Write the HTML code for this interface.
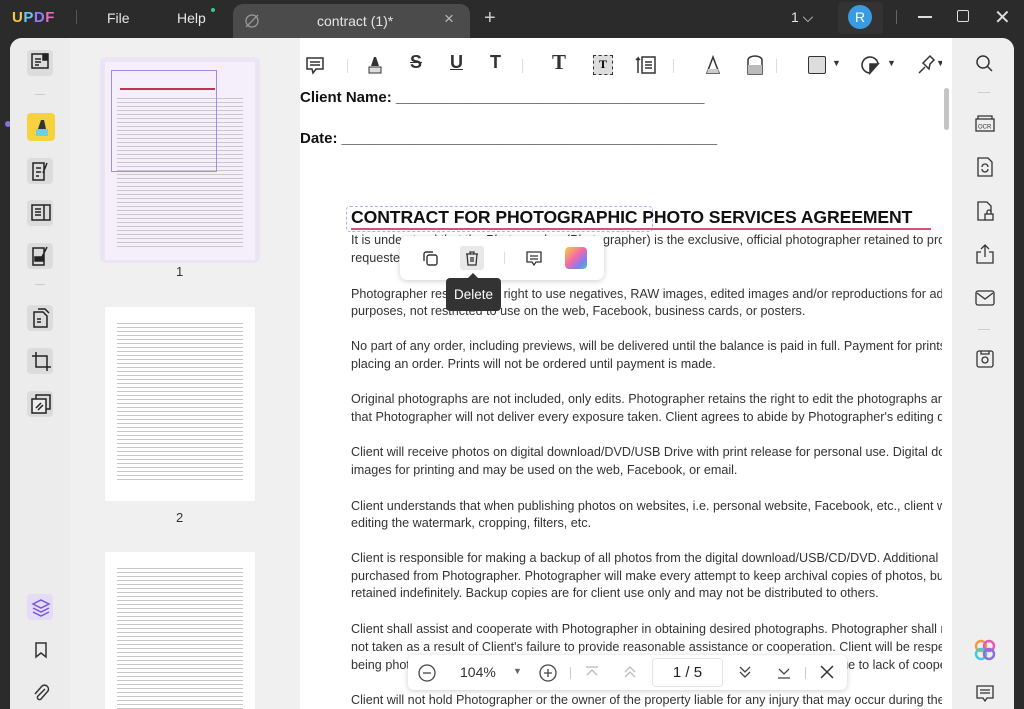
<!DOCTYPE html>
<html><head><meta charset="utf-8"><style>
*{margin:0;padding:0;box-sizing:border-box}
body{width:1024px;height:709px;overflow:hidden;background:#2b2b2b;font-family:"Liberation Sans",sans-serif;position:relative}
.abs{position:absolute}
.top{color:#e6e6e6;font-size:14px}
.main{left:10px;top:38px;width:1004px;height:671px;background:#efefef;border-radius:12px 12px 0 0;overflow:hidden}
.rail{left:0;top:0;width:60px;height:671px;background:#ececec}
.ico{position:absolute;width:26px;height:26px;border-radius:4px;background:#dcdcdc}
.doc{left:290px;top:0;width:642px;height:671px;background:#fff;overflow:hidden}
.p{position:absolute;left:51px;font-size:12.6px;color:#333;white-space:nowrap;line-height:17.5px}
.tb{position:absolute;top:14px;font-size:18px;color:#333;font-weight:bold}
.thumb{position:absolute;left:95px;width:150px;background:#fff}
.txt{position:absolute;left:12px;right:12px;background:repeating-linear-gradient(to bottom,#c8c8c8 0,#c8c8c8 1px,transparent 1px,transparent 4px)}
svg{position:absolute}
</style></head><body>
<div class="abs" style="left:12px;top:9px;font-weight:bold;font-size:15px;letter-spacing:0.5px"><span style="color:#f6c544">U</span><span style="color:#6ec3f1">P</span><span style="color:#8e7ef5">D</span><span style="color:#e86ab6">F</span></div>
<div class="abs" style="left:76px;top:10px;width:1px;height:14px;background:#555"></div>
<div class="abs top" style="left:107px;top:10px">File</div>
<div class="abs top" style="left:177px;top:10px">Help</div>
<div class="abs" style="left:211px;top:8px;width:4px;height:4px;border-radius:50%;background:#3ec78a"></div>
<div class="abs" style="left:233px;top:4px;width:237px;height:40px;background:#4b4b4b;border-radius:10px 10px 0 0"></div>
<svg style="left:244px;top:13px" width="16" height="16" viewBox="0 0 16 16" fill="none" stroke="#999" stroke-width="1.3"><circle cx="8" cy="8" r="6"/><path d="M2 14L14 2"/></svg>
<div class="abs top" style="left:317px;top:13px;font-size:14px">contract (1)*</div>
<div class="abs" style="left:444px;top:9px;color:#bbb;font-size:17px">×</div>
<div class="abs" style="left:484px;top:7px;color:#ccc;font-size:20px">+</div>
<div class="abs top" style="left:791px;top:9px">1 ⌵</div>
<div class="abs" style="left:838px;top:2px;width:45px;height:32px;background:#333;border-radius:4px"></div>
<div class="abs" style="left:848px;top:5px;width:24px;height:24px;border-radius:50%;background:#3b9be0;color:#fff;font-size:14px;text-align:center;line-height:24px">R</div>
<div class="abs" style="left:896px;top:10px;width:1px;height:14px;background:#666"></div>
<div class="abs" style="left:918px;top:16px;width:14px;height:1.5px;background:#ddd"></div>
<div class="abs" style="left:957px;top:10px;width:12px;height:12px;border:1.5px solid #ddd;border-radius:2px"></div>
<div class="abs" style="left:994px;top:5px;color:#ddd;font-size:20px">✕</div>
<div class="abs" style="left:5px;top:121px;width:6px;height:6px;border-radius:50%;background:#8c6de0"></div>

<div class="abs main">
 <div class="abs rail">
  <div class="ico" style="left:17px;top:12px"></div>
  <svg style="left:20px;top:14px" width="20" height="20" fill="none" stroke="#222" stroke-width="1.5"><rect x="2" y="2" width="16" height="14"/><path d="M5 7h6M5 10h6M5 13h4"/><rect x="13" y="2" width="4" height="6" fill="#222"/></svg>
  <div class="abs" style="left:25px;top:56px;width:10px;height:1px;background:#ccc"></div>
  <div class="ico" style="left:17px;top:75px;background:#f6d33d;width:28px;height:28px"></div>
  <svg style="left:22px;top:79px" width="20" height="20"><path d="M6 12L9 3 12 3 14 12Z" fill="#333"/><rect x="4" y="12" width="12" height="7" fill="#6cd0e0"/></svg>
  <div class="ico" style="left:17px;top:120px"></div>
  <svg style="left:20px;top:122px" width="22" height="22" fill="none" stroke="#222" stroke-width="1.5"><path d="M3 3h11v17H3zM6 8h5M6 12h5M6 16h3M17 3l-4 10"/></svg>
  <div class="ico" style="left:17px;top:162px"></div>
  <svg style="left:20px;top:164px" width="22" height="22" fill="none" stroke="#222" stroke-width="1.5"><rect x="2" y="3" width="18" height="15"/><path d="M5 7h6M5 10h6M5 13h6M14 3v15"/></svg>
  <div class="ico" style="left:17px;top:205px"></div>
  <svg style="left:20px;top:207px" width="22" height="22" fill="none" stroke="#222" stroke-width="1.5"><path d="M3 3h11v17H3zM17 2l-5 10"/><rect x="5" y="12" width="8" height="4" fill="#222"/></svg>
  <div class="abs" style="left:25px;top:246px;width:10px;height:1px;background:#ccc"></div>
  <div class="ico" style="left:17px;top:267px"></div>
  <svg style="left:20px;top:269px" width="22" height="22" fill="none" stroke="#222" stroke-width="1.5"><path d="M4 5h9l4 4v11H4zM7 12h4M7 15h4M8 2h7l4 4"/></svg>
  <div class="ico" style="left:17px;top:310px"></div>
  <svg style="left:20px;top:312px" width="22" height="22" fill="none" stroke="#222" stroke-width="1.5"><path d="M6 2v15h15M2 6h15v15"/></svg>
  <div class="ico" style="left:17px;top:353px"></div>
  <svg style="left:20px;top:355px" width="22" height="22" fill="none" stroke="#222" stroke-width="1.5"><rect x="6" y="2" width="14" height="14"/><rect x="2" y="6" width="14" height="14" fill="#ececec"/><path d="M6 15l5-5M8 17l5-5"/></svg>
  <div class="ico" style="left:17px;top:556px;background:#e4dcf7"></div>
  <svg style="left:21px;top:560px" width="20" height="20" fill="none" stroke="#7a55d8" stroke-width="1.5"><path d="M10 2l8 4-8 4-8-4zM2 10l8 4 8-4M2 14l8 4 8-4"/></svg>
  <svg style="left:23px;top:603px" width="16" height="18" fill="none" stroke="#333" stroke-width="1.5"><path d="M3 2h10v14l-5-4-5 4z"/></svg>
  <svg style="left:22px;top:645px" width="18" height="20" fill="none" stroke="#333" stroke-width="1.5"><path d="M13 6l-7 7a2 2 0 0 0 3 3l7-8a4 4 0 0 0-6-5L3 11"/></svg>
 </div>
 <div class="abs" style="left:60px;top:0;width:230px;height:671px;background:#f0f0f0"></div>
 <div class="abs" style="left:90px;top:19px;width:160px;height:206px;background:#ebe4f5;border-radius:6px"></div>
 <div class="thumb" style="top:24px;height:198px;background:#f5effc">
  <div class="txt" style="top:36px;height:150px"></div>
  <div class="abs" style="left:6px;top:8px;width:106px;height:102px;border:1px solid #a78be0"></div>
  <div class="abs" style="left:15px;top:26px;width:95px;background:#c0324f;height:2px"></div>
 </div>
 <div class="abs" style="left:166px;top:226px;font-size:13px;color:#333">1</div>
 <div class="thumb" style="top:269px;height:194px"><div class="txt" style="top:16px;height:160px"></div></div>
 <div class="abs" style="left:166px;top:472px;font-size:13px;color:#333">2</div>
 <div class="thumb" style="top:514px;height:170px"><div class="txt" style="top:16px;height:150px"></div></div>

 <div class="abs doc">
  <svg style="left:4px;top:16px" width="22" height="22" fill="none" stroke="#333" stroke-width="1.5"><path d="M3 4h16v11H12l-3 4-1-4H3z M6 8h10M6 11h10"/></svg>
  <div class="abs" style="left:47px;top:21px;width:1px;height:14px;background:#ddd"></div>
  <svg style="left:64px;top:16px" width="22" height="22"><path d="M7 12L10 3h2l3 9Z" fill="#333"/><path d="M5 19V13h12v6z" fill="#ddd" stroke="#333"/></svg>
  <div class="tb" style="left:110px;text-decoration:line-through">S</div>
  <div class="tb" style="left:150px;text-decoration:underline">U</div>
  <div class="tb" style="left:190px">T</div>
  <div class="abs" style="left:222px;top:21px;width:1px;height:14px;background:#ddd"></div>
  <div class="tb" style="left:252px;font-family:'Liberation Serif',serif;font-size:21px;top:12px">T</div>
  <div class="abs" style="left:293px;top:17px;width:20px;height:20px;border:1.5px dashed #333;background:#ddd;font-size:12px;font-weight:bold;text-align:center;line-height:17px;font-family:'Liberation Serif',serif">T</div>
  <svg style="left:334px;top:16px" width="24" height="22" fill="none" stroke="#333" stroke-width="1.5"><rect x="8" y="3" width="13" height="16"/><path d="M11 8h7M11 11h7M11 14h7M4 19V4l-2 2M4 4l2 2"/></svg>
  <div class="abs" style="left:373px;top:21px;width:1px;height:14px;background:#ddd"></div>
  <svg style="left:402px;top:15px" width="22" height="24"><path d="M5 20L11 4 17 20Z" fill="none" stroke="#333" stroke-width="1.5"/><path d="M6 16h10l1 4H5z" fill="#ccc"/></svg>
  <svg style="left:445px;top:16px" width="20" height="22"><path d="M3 20V6a7 4 0 0 1 14 0v14z" fill="none" stroke="#333" stroke-width="1.5"/><rect x="3" y="11" width="14" height="9" fill="#bbb"/></svg>
  <div class="abs" style="left:476px;top:21px;width:1px;height:14px;background:#ddd"></div>
  <div class="abs" style="left:508px;top:18px;width:18px;height:18px;border:1.5px solid #333;background:#ddd;border-radius:2px"></div>
  <div class="abs" style="left:532px;top:20px;font-size:9px;color:#333">▼</div>
  <svg style="left:560px;top:16px" width="22" height="22" fill="none" stroke="#333" stroke-width="1.6"><path d="M18 10A8 8 0 1 0 10 19"/><path d="M10 19l8-9h-8z" fill="#333"/></svg>
  <div class="abs" style="left:587px;top:20px;font-size:9px;color:#333">▼</div>
  <svg style="left:616px;top:16px" width="22" height="22" fill="none" stroke="#333" stroke-width="1.5"><path d="M3 19l6-6M7 9l6 6 1-5 4-4-4-4-4 4z"/></svg>
  <div class="abs" style="left:636px;top:20px;font-size:9px;color:#333">▼</div>

  <div class="abs" style="left:0;top:51px;font-size:15px;font-weight:bold;color:#111;white-space:nowrap">Client Name: _____________________________________</div>
  <div class="abs" style="left:0;top:92px;font-size:15px;font-weight:bold;color:#111;white-space:nowrap">Date: _____________________________________________</div>
  <div class="abs" style="left:46px;top:168px;width:307px;height:26px;border:1px dashed #bfa8e0;border-radius:4px"></div>
  <div class="abs" style="left:51px;top:169px;font-size:17.6px;font-weight:bold;color:#111;white-space:nowrap;letter-spacing:-0.1px">CONTRACT FOR PHOTOGRAPHIC PHOTO SERVICES AGREEMENT</div>
  <div class="abs" style="left:51px;top:190px;width:580px;height:2px;background:#d8507a"></div>
  <div class="p" style="top:194px">It is understood that the Photographer (Photographer) is the exclusive, official photographer retained to provi</div>
  <div class="p" style="top:212px">requested services.</div>
  <div class="p" style="top:248px">Photographer reserves the right to use negatives, RAW images, edited images and/or reproductions for advertising</div>
  <div class="p" style="top:265px">purposes, not restricted to use on the web, Facebook, business cards, or posters.</div>
  <div class="p" style="top:300px">No part of any order, including previews, will be delivered until the balance is paid in full. Payment for prints is</div>
  <div class="p" style="top:318px">placing an order. Prints will not be ordered until payment is made.</div>
  <div class="p" style="top:353px">Original photographs are not included, only edits. Photographer retains the right to edit the photographs and om</div>
  <div class="p" style="top:371px">that Photographer will not deliver every exposure taken. Client agrees to abide by Photographer's editing decisions</div>
  <div class="p" style="top:406px">Client will receive photos on digital download/DVD/USB Drive with print release for personal use. Digital downl</div>
  <div class="p" style="top:424px">images for printing and may be used on the web, Facebook, or email.</div>
  <div class="p" style="top:460px">Client understands that when publishing photos on websites, i.e. personal website, Facebook, etc., client will not e</div>
  <div class="p" style="top:477px">editing the watermark, cropping, filters, etc.</div>
  <div class="p" style="top:512px">Client is responsible for making a backup of all photos from the digital download/USB/CD/DVD. Additional U</div>
  <div class="p" style="top:530px">purchased from Photographer. Photographer will make every attempt to keep archival copies of photos, but does r</div>
  <div class="p" style="top:547px">retained indefinitely. Backup copies are for client use only and may not be distributed to others.</div>
  <div class="p" style="top:583px">Client shall assist and cooperate with Photographer in obtaining desired photographs. Photographer shall not be</div>
  <div class="p" style="top:601px">not taken as a result of Client's failure to provide reasonable assistance or cooperation. Client will be respectful to</div>
  <div class="p" style="top:619px">being photographed and guests. Photographer is not responsible for images not taken due to lack of cooperation c</div>
  <div class="p" style="top:654px">Client will not hold Photographer or the owner of the property liable for any injury that may occur during the sessio</div>

  <div class="abs" style="left:100px;top:198px;width:204px;height:44px;background:#fff;border-radius:7px;box-shadow:0 1px 6px rgba(0,0,0,.2)"></div>
  <svg style="left:121px;top:211px" width="18" height="18" fill="none" stroke="#333" stroke-width="1.4"><rect x="6" y="6" width="10" height="10" rx="2"/><path d="M12 3H5a2 2 0 0 0-2 2v7"/></svg>
  <div class="abs" style="left:160px;top:208px;width:24px;height:24px;background:#e8e8e8;border-radius:3px"></div>
  <svg style="left:163px;top:211px" width="18" height="18" fill="none" stroke="#333" stroke-width="1.3"><path d="M3 5h12M7 5V3h4v2M4 5l1 11h8l1-11M8 8v5M10 8v5"/></svg>
  <div class="abs" style="left:204px;top:214px;width:1px;height:12px;background:#ddd"></div>
  <svg style="left:225px;top:211px" width="18" height="18" fill="none" stroke="#333" stroke-width="1.3"><path d="M2 3h14v10H11l-2 3-2-3H2zM5 7h8M5 10h8"/></svg>
  <div class="abs" style="left:265px;top:209px;width:22px;height:22px;border-radius:4px;background:linear-gradient(135deg,#f5d33f,#f46aa5 45%,#7b7ff5 75%,#3fd3a0)"></div>
  <div class="abs" style="left:146px;top:240px;width:55px;height:33px;background:#333;border-radius:4px;color:#fff;font-size:13.5px;text-align:center;line-height:33px">Delete</div>
  <div class="abs" style="left:168px;top:235px;width:0;height:0;border:5px solid transparent;border-bottom-color:#333;border-top:0"></div>

  <div class="abs" style="left:108px;top:617px;width:439px;height:35px;background:#fff;border-radius:6px;box-shadow:0 1px 6px rgba(0,0,0,.2)"></div>
  <svg style="left:117px;top:625px" width="20" height="20" fill="none" stroke="#444" stroke-width="1.3"><circle cx="10" cy="10" r="8"/><path d="M6 10h8"/></svg>
  <div class="abs" style="left:160px;top:626px;font-size:14px;color:#333">104%</div>
  <div class="abs" style="left:213px;top:628px;font-size:9px;color:#666">▼</div>
  <svg style="left:238px;top:625px" width="20" height="20" fill="none" stroke="#444" stroke-width="1.3"><circle cx="10" cy="10" r="8"/><path d="M6 10h8M10 6v8"/></svg>
  <div class="abs" style="left:270px;top:629px;width:1px;height:12px;background:#ccc"></div>
  <svg style="left:284px;top:626px" width="16" height="16" fill="none" stroke="#bbb" stroke-width="1.3"><path d="M2 3h12M3 11l5-5 5 5"/></svg>
  <svg style="left:322px;top:626px" width="16" height="16" fill="none" stroke="#bbb" stroke-width="1.3"><path d="M3 8l5-5 5 5M3 13l5-5 5 5"/></svg>
  <div class="abs" style="left:352px;top:620px;width:71px;height:29px;border:1px solid #e4e4e4;border-radius:4px;font-size:15px;color:#222;text-align:center;line-height:27px">1 / 5</div>
  <svg style="left:437px;top:626px" width="16" height="16" fill="none" stroke="#444" stroke-width="1.3"><path d="M3 3l5 5 5-5M3 8l5 5 5-5"/></svg>
  <svg style="left:476px;top:626px" width="16" height="16" fill="none" stroke="#444" stroke-width="1.3"><path d="M3 5l5 5 5-5M2 14h12"/></svg>
  <div class="abs" style="left:505px;top:629px;width:1px;height:12px;background:#ccc"></div>
  <svg style="left:519px;top:626px" width="16" height="16" fill="none" stroke="#333" stroke-width="1.5"><path d="M2 2l12 12M14 2L2 14"/></svg>
 </div>
 <div class="abs" style="left:932px;top:0;width:10px;height:671px;background:#fff"></div>
 <div class="abs" style="left:934px;top:50px;width:5px;height:42px;background:#c4c4c4;border-radius:3px"></div>
 <div class="abs" style="left:942px;top:0;width:62px;height:671px;background:#efefef"></div>
 <svg style="left:964px;top:15px" width="22" height="22" fill="none" stroke="#333" stroke-width="1.5"><circle cx="9" cy="9" r="6"/><path d="M13 13l5 5"/></svg>
 <div class="abs" style="left:968px;top:54px;width:12px;height:1px;background:#ccc"></div>
 <svg style="left:964px;top:75px" width="22" height="22" fill="none" stroke="#333" stroke-width="1.3"><rect x="2" y="6" width="18" height="12"/><path d="M4 6V3h14v3"/><text x="4" y="15.5" font-size="6" fill="#333" stroke="none" font-family="Liberation Sans">OCR</text></svg>
 <svg style="left:964px;top:118px" width="22" height="22" fill="none" stroke="#333" stroke-width="1.3"><path d="M4 2h10l4 4v14H4z"/><path d="M8 11a3 3 0 0 1 6 0M14 13a3 3 0 0 1-6 0"/></svg>
 <svg style="left:964px;top:162px" width="22" height="22" fill="none" stroke="#333" stroke-width="1.3"><path d="M11 20H4V2h9l4 4v6"/><rect x="11" y="14" width="8" height="6"/><path d="M13 14v-2a2 2 0 0 1 4 0v2"/></svg>
 <svg style="left:964px;top:205px" width="22" height="22" fill="none" stroke="#333" stroke-width="1.3"><path d="M7 9H3v11h16V9h-4M11 14V2M7 6l4-4 4 4"/></svg>
 <svg style="left:964px;top:249px" width="22" height="22" fill="none" stroke="#333" stroke-width="1.3"><rect x="2" y="4" width="18" height="14" rx="2"/><path d="M3 6l8 6 8-6"/></svg>
 <div class="abs" style="left:968px;top:291px;width:12px;height:1px;background:#ccc"></div>
 <svg style="left:964px;top:310px" width="22" height="22" fill="none" stroke="#333" stroke-width="1.3"><rect x="3" y="3" width="16" height="16" rx="2"/><circle cx="11" cy="12" r="3"/><path d="M7 3v3h8V3"/></svg>
 <svg style="left:963px;top:600px" width="24" height="24" fill="none" stroke-width="2.5"><circle cx="8" cy="8" r="5" stroke="#f59a3f"/><circle cx="16" cy="8" r="5" stroke="#e85ab6"/><circle cx="8" cy="16" r="5" stroke="#43c9e0"/><circle cx="16" cy="16" r="5" stroke="#8c6de0"/></svg>
 <svg style="left:964px;top:645px" width="22" height="22" fill="none" stroke="#333" stroke-width="1.3"><path d="M3 3h16v12h-6l-2 3-2-3H3zM6 7h10M6 10h10"/></svg>
</div>
</body></html>
